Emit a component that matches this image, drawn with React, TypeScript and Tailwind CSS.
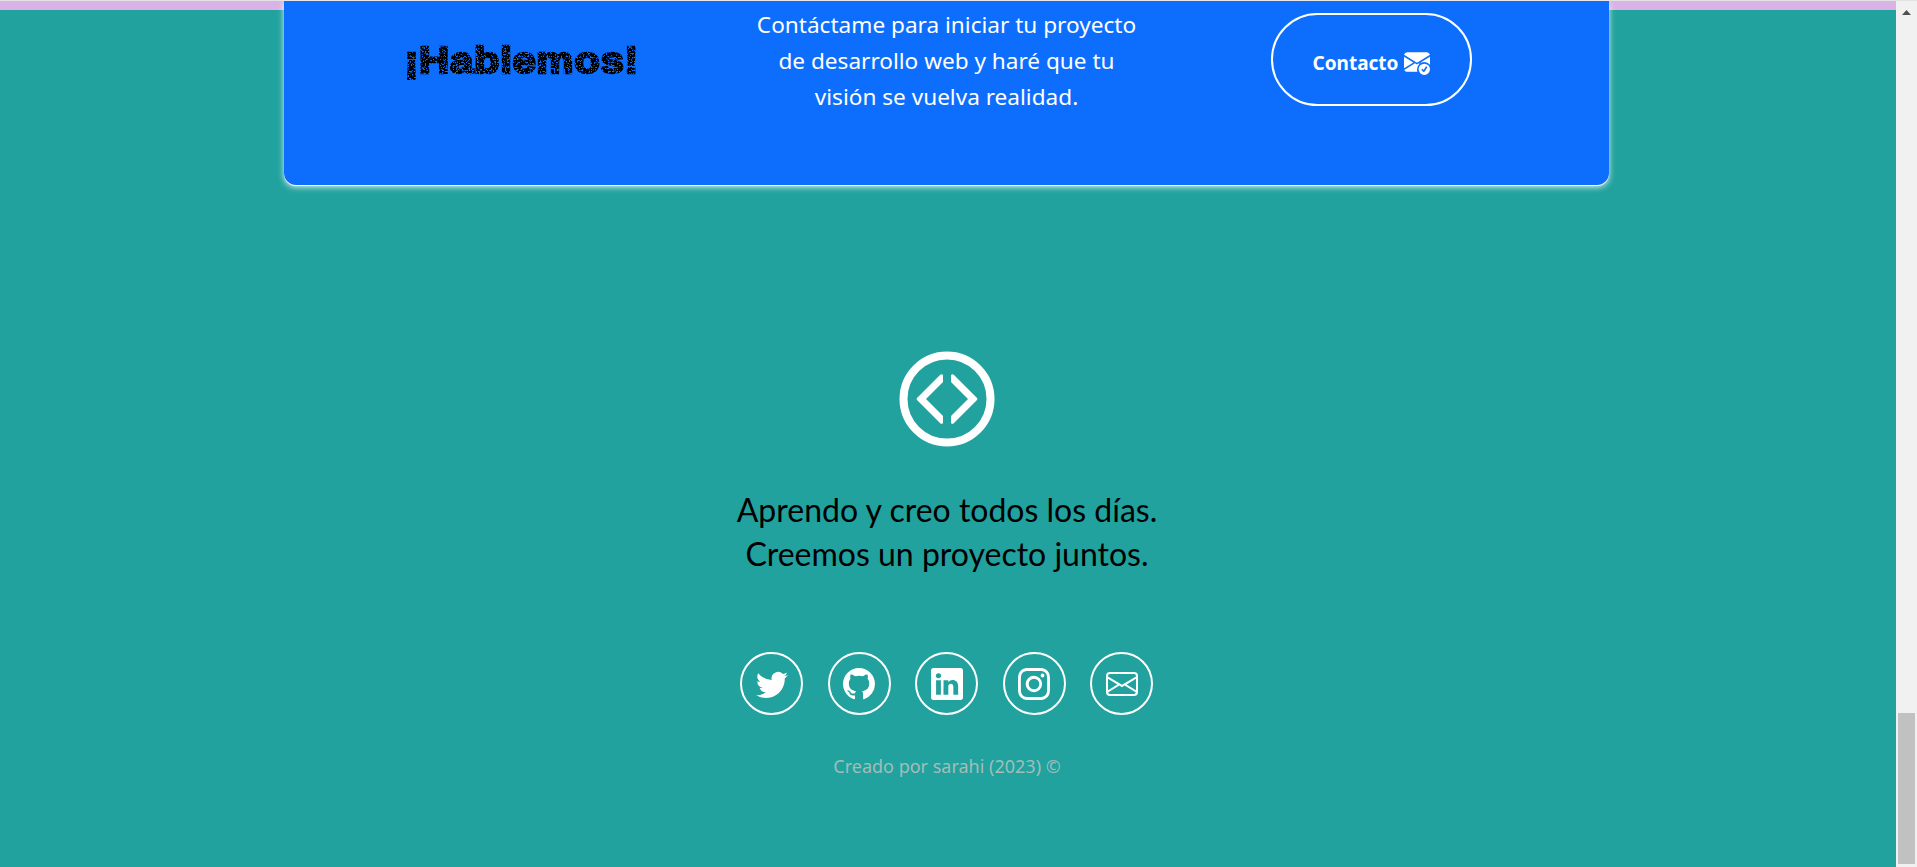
import { BsTwitter, BsGithub, BsLinkedin, BsInstagram, BsEnvelope, BsEnvelopeCheckFill } from "react-icons/bs";

const socials = [BsTwitter, BsGithub, BsLinkedin, BsInstagram, BsEnvelope];

const ScrollBar = () => (
  <aside className="w-[21px] bg-[#f1f1f1] flex flex-col justify-between items-center pb-[3px]">
    <svg width="9" height="6" viewBox="0 0 9 6" className="mt-[9px]">
      <path d="M4.5 0 L9 5 H0 Z" fill="#505050" />
    </svg>
    <div className="w-[17px] h-[151px] bg-[#c1c1c1]" />
  </aside>
);

const App = () => {
  return (
    <div className="h-[867px] flex flex-col overflow-hidden font-['Noto_Sans',sans-serif]">
      <svg width="0" height="0" className="absolute">
        <filter id="grain" x="0" y="0" width="100%" height="100%">
          <feTurbulence type="fractalNoise" baseFrequency="0.65" numOctaves="3" seed="7" result="noise" />
          <feColorMatrix
            in="noise"
            type="matrix"
            values="0 0 0 0 0  0 0 0 0 0  0 0 0 0 0  0 0 0 -9 5.9"
            result="mask"
          />
          <feComposite in="SourceGraphic" in2="mask" operator="in" />
        </filter>
      </svg>
      <div className="h-px bg-[#e3e3e3]" />
      <div className="flex-1 flex">
        <main className="flex-1 bg-[#21a29e] flex flex-col">
          <div className="h-[9px] bg-[#d9b3e6]" />
          <section className="relative -mt-[9px] ml-[284px] w-[1325px] h-[184px] px-[25px] pt-[6px] grid grid-cols-3 bg-[#0d6efd] rounded-b-[12px] shadow-[0_1px_0_#fff,0_2px_6px_rgba(255,255,255,0.85)] text-white">
            <div className="flex justify-center pt-[29px]">
              <h2 className="h-[50px] whitespace-nowrap text-[37px] leading-[50px] font-bold font-['Liberation_Sans',sans-serif] tracking-[0.6px] scale-x-[1.13] text-black [-webkit-text-stroke:2.4px_black] [filter:url(#grain)]">
                ¡Hablemos!
              </h2>
            </div>
            <p className="text-[22.6px] leading-[36px] text-center px-[20px]">
              Contáctame para iniciar tu proyecto de desarrollo web y haré que tu visión se vuelva realidad.
            </p>
            <div className="flex justify-center pt-[6px]">
              <a className="w-[201px] h-[93px] pt-[8px] border-2 border-white rounded-full flex items-center justify-center gap-[6px] text-[19px] font-bold">
                Contacto <BsEnvelopeCheckFill className="text-[26px] -mt-[4px]" />
              </a>
            </div>
          </section>

          <footer className="flex flex-col items-center pr-[2px]">
            <svg width="96" height="96" viewBox="0 0 96 96" className="mt-[166px] text-white" fill="none">
              <circle cx="48" cy="48" r="43.5" stroke="currentColor" strokeWidth="8" />
              <path d="M44 24 V31 L27 48 L44 65 V72 a2 2 0 0 1-3 0 L18 49 a1.5 1.5 0 0 1 0-2 L41 24 a2 2 0 0 1 3 0 Z" fill="currentColor" />
              <path d="M52 24 V31 L69 48 L52 65 V72 a2 2 0 0 0 3 0 L78 49 a1.5 1.5 0 0 0 0-2 L55 24 a2 2 0 0 0-3 0 Z" fill="currentColor" />
            </svg>
            <p className="mt-[41px] text-[32px] leading-[44px] text-center text-black font-['Lato',sans-serif]">
              Aprendo y creo todos los días.
              <br />
              Creemos un proyecto juntos.
            </p>
            <div className="mt-[76px] -ml-[1px] flex gap-[24.5px]">
              {socials.map((Icon, i) => (
                <a key={i} className="w-[63px] h-[63px] border-2 border-white rounded-full flex items-center justify-center text-white">
                  <Icon className="text-[32px]" />
                </a>
              ))}
            </div>
            <p className="mt-[38px] text-[18px] leading-[27px] text-[#a3bdb9]">Creado por sarahi (2023) ©</p>
          </footer>
        </main>
        <ScrollBar />
      </div>
    </div>
  );
};

export default App;
